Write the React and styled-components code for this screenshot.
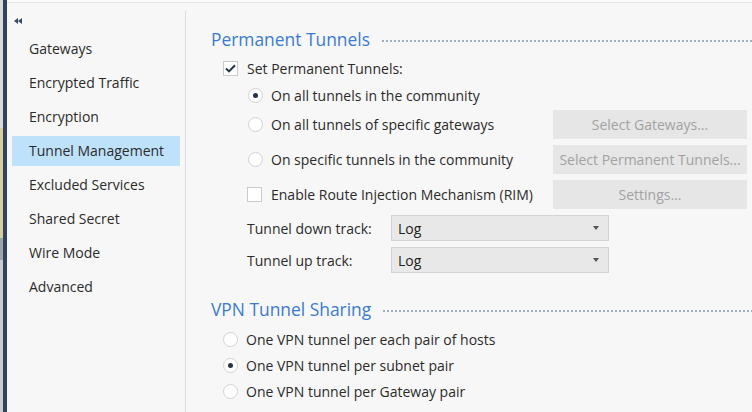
import styled, { createGlobalStyle } from "styled-components";

const GlobalStyle = createGlobalStyle`
  html, body {
    margin: 0;
    padding: 0;
    background: #f7f7f7;
  }
  body {
    font-family: "Open Sans", "Noto Sans", sans-serif;
    color: #2b2b2b;
  }
`;

const Screen = styled.div`
  display: flex;
  width: 752px;
  height: 412px;
  overflow: hidden;
`;

// window behind the dialog, only a sliver shows
const Backdrop = styled.div`
  width: 3px;
  flex-shrink: 0;
  display: flex;
  flex-direction: column;
`;
const BackdropPiece = styled.div`
  height: ${(p) => p.$h}px;
  flex: ${(p) => (p.$h ? "none" : 1)};
  background: ${(p) => p.$c};
`;

const Frame = styled.div`
  flex: 1;
  display: flex;
  flex-direction: column;
  border-left: 4px solid #2f425e;
  background: #f7f7f7;
`;
const TopRule = styled.div`
  height: 2px;
  background: #fbfbfb;
  border-bottom: 1px solid #e2e2e2;
  flex-shrink: 0;
`;
const Body = styled.div`
  flex: 1;
  display: flex;
`;

const Sidebar = styled.nav`
  width: 178px;
  flex-shrink: 0;
  padding: 0 5px;
  box-sizing: border-box;
  display: flex;
  flex-direction: column;
  gap: 4px;
`;
const CollapseBar = styled.div`
  height: 27px;
  display: flex;
  align-items: flex-start;
  padding: 15px 0 0 2px;
  box-sizing: border-box;
`;
const NavItem = styled.div`
  height: 30px;
  display: flex;
  align-items: center;
  padding-left: 17px;
  padding-bottom: 2px;
  box-sizing: border-box;
  font-size: 14px;
  color: #2b2b2b;
  background: ${(p) => (p.$active ? "#bfe2fb" : "transparent")};
`;

const Main = styled.main`
  flex: 1;
  margin-top: 8px;
  border-left: 1px solid #dcdcdc;
  padding: 16px 0 0 25px;
  display: flex;
  flex-direction: column;
`;

const SectionHead = styled.div`
  height: 24px;
  display: flex;
  align-items: center;
  gap: 12px;
  margin-top: ${(p) => p.$mt || 0}px;
`;
const SectionTitle = styled.h2`
  margin: 0;
  font-size: 17.4px;
  font-weight: 400;
  color: #3b7bd0;
  white-space: nowrap;
`;
const Dots = styled.div`
  flex: 1;
  height: 2px;
  margin-top: 3px;
  background-image: linear-gradient(to right, #a3acbd 2px, transparent 2px);
  background-size: 4px 2px;
  background-repeat: repeat-x;
`;

const Row = styled.div`
  display: flex;
  align-items: center;
  height: ${(p) => p.$h}px;
  margin-top: ${(p) => p.$mt || 0}px;
  padding-left: ${(p) => p.$indent}px;
  padding-right: 5px;
  font-size: 14px;
`;
const Option = styled.label`
  display: flex;
  align-items: center;
  gap: ${(p) => p.$gap || 8}px;
  white-space: nowrap;
`;

const Box = styled.span`
  width: 15px;
  height: 15px;
  box-sizing: border-box;
  border: 1px solid #cacaca;
  background: #fff;
  display: flex;
  align-items: center;
  justify-content: center;
`;
const Radio = styled.span`
  width: 15px;
  height: 15px;
  box-sizing: border-box;
  border-radius: 50%;
  border: 1px solid #d2d2d2;
  background: #fff;
  display: flex;
  align-items: center;
  justify-content: center;
  &::after {
    content: "";
    width: 5px;
    height: 5px;
    border-radius: 50%;
    background: ${(p) => (p.$on ? "#26334a" : "transparent")};
  }
`;

const GhostButton = styled.div`
  margin-left: auto;
  width: 194px;
  height: 29px;
  background: #e6e6e6;
  color: #a2a2a2;
  font-size: 14px;
  display: flex;
  align-items: center;
  justify-content: center;
  white-space: nowrap;
`;

const FieldLabel = styled.span`
  width: 144px;
  white-space: nowrap;
`;
const Select = styled.div`
  width: 218px;
  height: 26px;
  box-sizing: border-box;
  border: 1px solid #d4d4d4;
  background: #e8e8e8;
  display: flex;
  align-items: center;
  justify-content: space-between;
  padding: 0 9px 0 6px;
  font-size: 14px;
  color: #222;
`;
const Caret = styled.span`
  width: 0;
  height: 0;
  border-left: 3px solid transparent;
  border-right: 3px solid transparent;
  border-top: 4px solid #555;
`;

const navItems = [
  "Gateways",
  "Encrypted Traffic",
  "Encryption",
  "Tunnel Management",
  "Excluded Services",
  "Shared Secret",
  "Wire Mode",
  "Advanced",
];

function Check() {
  return (
    <svg width="11" height="9" viewBox="0 0 11 9">
      <path d="M1 4.6 L4 7.4 L10 1.2" fill="none" stroke="#26334a" strokeWidth="2" />
    </svg>
  );
}

function Collapse() {
  return (
    <svg width="8" height="6" viewBox="0 0 8 6">
      <path d="M4 0 L0 3 L4 6 Z M8 0 L4 3 L8 6 Z" fill="#3a4a62" />
    </svg>
  );
}

export default function App() {
  return (
    <>
      <GlobalStyle />
      <Screen>
        <Backdrop>
          <BackdropPiece $h={128} $c="#dadada" />
          <BackdropPiece $h={110} $c="#d8cd9d" />
          <BackdropPiece $h={22} $c="#9ea2a9" />
          <BackdropPiece $c="#cbcbcd" />
        </Backdrop>
        <Frame>
          <TopRule />
          <Body>
            <Sidebar>
              <CollapseBar>
                <Collapse />
              </CollapseBar>
              {navItems.map((item) => (
                <NavItem key={item} $active={item === "Tunnel Management"}>
                  {item}
                </NavItem>
              ))}
            </Sidebar>

            <Main>
              <SectionHead>
                <SectionTitle>Permanent Tunnels</SectionTitle>
                <Dots />
              </SectionHead>

              <Row $h={28} $mt={3} $indent={12}>
                <Option $gap={9}>
                  <Box>
                    <Check />
                  </Box>
                  Set Permanent Tunnels:
                </Option>
              </Row>
              <Row $h={26} $indent={37}>
                <Option>
                  <Radio $on />
                  On all tunnels in the community
                </Option>
              </Row>
              <Row $h={29} $mt={2} $indent={37}>
                <Option>
                  <Radio />
                  On all tunnels of specific gateways
                </Option>
                <GhostButton>Select Gateways...</GhostButton>
              </Row>
              <Row $h={29} $mt={6} $indent={37}>
                <Option>
                  <Radio />
                  On specific tunnels in the community
                </Option>
                <GhostButton>Select Permanent Tunnels...</GhostButton>
              </Row>
              <Row $h={29} $mt={6} $indent={36}>
                <Option $gap={9}>
                  <Box />
                  Enable Route Injection Mechanism (RIM)
                </Option>
                <GhostButton>Settings...</GhostButton>
              </Row>
              <Row $h={26} $mt={6} $indent={36}>
                <FieldLabel>Tunnel down track:</FieldLabel>
                <Select>
                  Log
                  <Caret />
                </Select>
              </Row>
              <Row $h={26} $mt={6} $indent={36}>
                <FieldLabel>Tunnel up track:</FieldLabel>
                <Select>
                  Log
                  <Caret />
                </Select>
              </Row>

              <SectionHead $mt={24}>
                <SectionTitle>VPN Tunnel Sharing</SectionTitle>
                <Dots />
              </SectionHead>
              <Row $h={26} $mt={5} $indent={12}>
                <Option>
                  <Radio />
                  One VPN tunnel per each pair of hosts
                </Option>
              </Row>
              <Row $h={26} $indent={12}>
                <Option>
                  <Radio $on />
                  One VPN tunnel per subnet pair
                </Option>
              </Row>
              <Row $h={26} $indent={12}>
                <Option>
                  <Radio />
                  One VPN tunnel per Gateway pair
                </Option>
              </Row>
            </Main>
          </Body>
        </Frame>
      </Screen>
    </>
  );
}
